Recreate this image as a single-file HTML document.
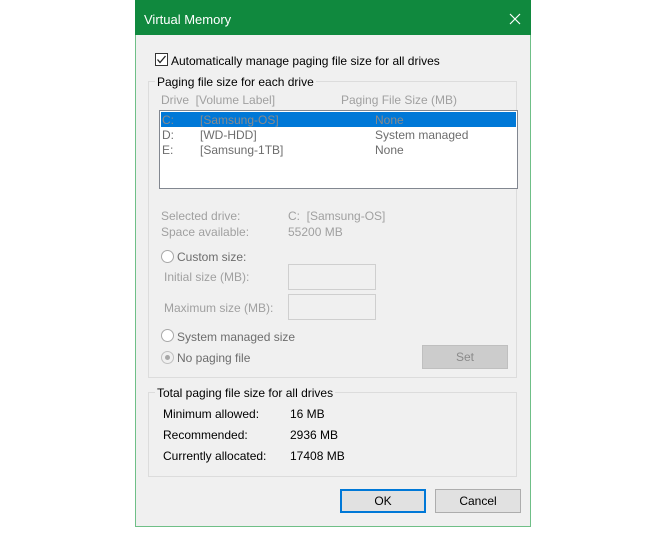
<!DOCTYPE html>
<html><head><meta charset="utf-8"><style>
*{margin:0;padding:0;box-sizing:border-box}
body{width:670px;height:533px;background:#fff;position:relative;overflow:hidden;font-family:"Liberation Sans",sans-serif;font-size:12px;color:#000}
.a{position:absolute;white-space:nowrap;line-height:14px;margin-top:1px}
.g{color:#a0a0a0}
.win{position:absolute;left:135px;top:0;width:396px;height:527px;background:#f0f0f0;border:1px solid #6fbf87}
.tb{position:absolute;left:135px;top:0;width:396px;height:35px;background:#10893e}
.grp{position:absolute;border:1px solid #dcdcdc}
.lbl{position:absolute;background:#f0f0f0;padding:0 2px;line-height:14px;margin-top:1px}
.box{position:absolute;border:1px solid #cfcfcf;background:#f0f0f0}
.rad{position:absolute;width:13px;height:13px;border:1px solid #a8a8a8;border-radius:50%;background:#fff}
.btn{position:absolute;background:#e1e1e1;border:1px solid #adadad;text-align:center;line-height:22px}
</style></head><body>
<div class="win"></div>
<div class="tb"></div>
<div class="a" style="left:144px;top:12px;color:#fff;font-size:13px">Virtual Memory</div>
<svg style="position:absolute;left:509px;top:13px" width="12" height="12"><path d="M1 1L11 11M11 1L1 11" stroke="#fff" stroke-width="1.2"/></svg>
<div style="position:absolute;left:155px;top:53px;width:13px;height:13px;border:1px solid #333;background:#fff"></div>
<svg style="position:absolute;left:155px;top:53px" width="13" height="13"><path d="M2.5 6.5L5 9.5L10.5 3" stroke="#222" stroke-width="1.3" fill="none"/></svg>
<div class="a" style="left:171px;top:53px">Automatically manage paging file size for all drives</div>
<div class="grp" style="left:148px;top:81px;width:369px;height:297px"></div>
<div class="lbl" style="left:155px;top:74px">Paging file size for each drive</div>
<div class="a g" style="left:161px;top:92px">Drive&nbsp; [Volume Label]</div>
<div class="a g" style="left:341px;top:92px">Paging File Size (MB)</div>
<div style="position:absolute;left:159px;top:110px;width:359px;height:79px;border:1px solid #828790;background:#fff"></div>
<div style="position:absolute;left:161px;top:112px;width:355px;height:15px;background:#0078d7"></div>
<div class="a" style="left:162px;top:112px;color:#8a8a8a">C:</div>
<div class="a" style="left:200px;top:112px;color:#8a8a8a">[Samsung-OS]</div>
<div class="a" style="left:375px;top:112px;color:#8a8a8a">None</div>
<div class="a" style="left:162px;top:127px;color:#6d6d6d">D:</div>
<div class="a" style="left:200px;top:127px;color:#6d6d6d">[WD-HDD]</div>
<div class="a" style="left:375px;top:127px;color:#6d6d6d">System managed</div>
<div class="a" style="left:162px;top:142px;color:#6d6d6d">E:</div>
<div class="a" style="left:200px;top:142px;color:#6d6d6d">[Samsung-1TB]</div>
<div class="a" style="left:375px;top:142px;color:#6d6d6d">None</div>
<div class="a g" style="left:161px;top:208px">Selected drive:</div>
<div class="a g" style="left:288px;top:208px">C:&nbsp; [Samsung-OS]</div>
<div class="a g" style="left:161px;top:224px">Space available:</div>
<div class="a g" style="left:288px;top:224px">55200 MB</div>
<div class="rad" style="left:161px;top:250px"></div>
<div class="a" style="left:177px;top:249px;color:#6d6d6d">Custom size:</div>
<div class="a g" style="left:164px;top:269px">Initial size (MB):</div>
<div class="box" style="left:288px;top:264px;width:88px;height:26px"></div>
<div class="a g" style="left:164px;top:300px">Maximum size (MB):</div>
<div class="box" style="left:288px;top:294px;width:88px;height:26px"></div>
<div class="rad" style="left:161px;top:329px"></div>
<div class="a" style="left:177px;top:329px;color:#6d6d6d">System managed size</div>
<div class="rad" style="left:161px;top:351px;background:#f0f0f0;border-color:#c0c0c0"></div>
<div style="position:absolute;left:165px;top:355px;width:5px;height:5px;border-radius:50%;background:#a8a8a8"></div>
<div class="a" style="left:177px;top:350px;color:#6d6d6d">No paging file</div>
<div class="btn" style="left:422px;top:345px;width:86px;height:24px;background:#cccccc;border-color:#bfbfbf;color:#8a8a8a">Set</div>
<div class="grp" style="left:148px;top:392px;width:369px;height:85px"></div>
<div class="lbl" style="left:155px;top:385px">Total paging file size for all drives</div>
<div class="a" style="left:163px;top:406px">Minimum allowed:</div>
<div class="a" style="left:290px;top:406px">16 MB</div>
<div class="a" style="left:163px;top:427px">Recommended:</div>
<div class="a" style="left:290px;top:427px">2936 MB</div>
<div class="a" style="left:163px;top:448px">Currently allocated:</div>
<div class="a" style="left:290px;top:448px">17408 MB</div>
<div class="btn" style="left:340px;top:489px;width:86px;height:24px;border:2px solid #0078d7;line-height:20px">OK</div>
<div class="btn" style="left:435px;top:489px;width:86px;height:24px">Cancel</div>
</body></html>
